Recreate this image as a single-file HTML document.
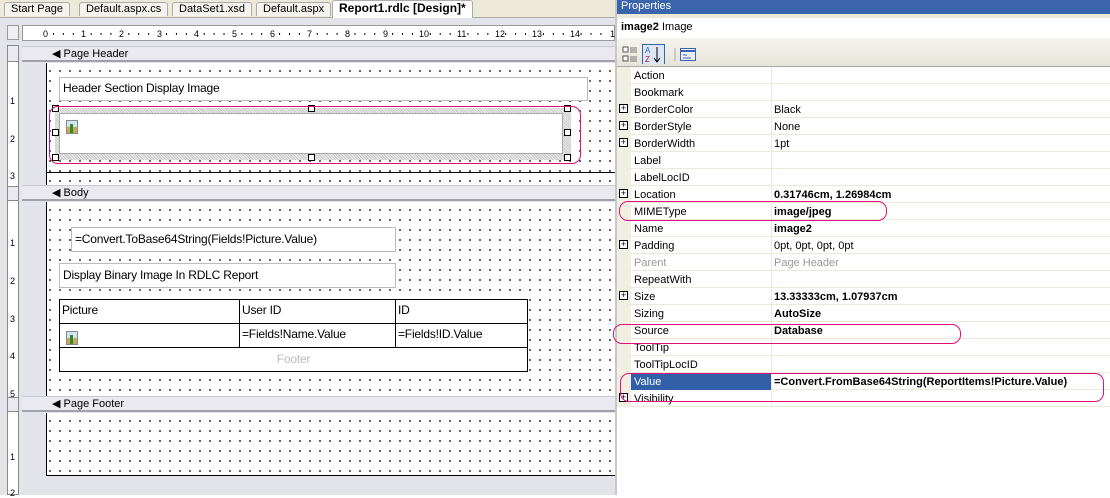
<!DOCTYPE html>
<html><head><style>
*{margin:0;padding:0;box-sizing:border-box}
body{width:1110px;height:495px;overflow:hidden;background:#fff;font-family:"Liberation Sans",sans-serif;font-size:11px;position:relative}
.a{position:absolute}
.tab{position:absolute;top:2px;height:14px;border:1px solid #aaa;border-bottom:none;background:#f4f3ee;font-size:11px;padding:0 6px;line-height:13px;border-radius:3px 3px 0 0}
.dots{background-color:#fff;background-image:radial-gradient(circle,#000 0.7px,transparent 1px);background-size:10px 10px;background-position:-2px 3px}
.band{position:absolute;left:22px;width:593px;height:16px;background:#e9e9ef;border-top:1px solid #c8c8d0;border-bottom:2px solid #a0a0a8}
.band span{position:absolute;left:30px;top:1px;font-size:11px;line-height:13px}
.box{position:absolute;border:1px solid #bbb;background:#fff;font-size:12px;padding-left:3px;letter-spacing:-0.2px}
.row{position:absolute;left:617px;width:493px;height:17px;border-bottom:1px solid #ece9d8;font-size:11px;line-height:18px}
.row .n{position:absolute;left:17px}
.row .v{position:absolute;left:157px}
.row .g{position:absolute;left:0;top:0;width:14px;height:17px;background:#f1efe2}
.row .sep{position:absolute;left:154px;top:0;width:1px;height:17px;background:#ece9d8}
.pl{position:absolute;left:2px;top:3px;width:9px;height:9px;border:1px solid #000;background:#fff;font-size:9px;line-height:7px;text-align:center}
.h{position:absolute;width:7px;height:7px;border:1px solid #000;background:#fff}
.pic{position:absolute;width:12px;height:14px;background:linear-gradient(#cfe3f3 50%,#c9a85a 50%);border:1px solid #8a8a8a}
.pic:after{content:"";position:absolute;left:3px;top:3px;width:3px;height:9px;background:#2d8a2d}
.ring{position:absolute;border:1px solid #e0107a;border-radius:9px}
.rn{position:absolute;top:29px;font-size:9px}
.t{font-size:12px;letter-spacing:-0.2px}
</style></head><body>
<div class="a" style="left:0;top:0;width:617px;height:18px;background:#ece9d8;border-bottom:1px solid #aaa"></div>
<div class="tab" style="left:4px">Start Page</div>
<div class="tab" style="left:79px">Default.aspx.cs</div>
<div class="tab" style="left:172px">DataSet1.xsd</div>
<div class="tab" style="left:256px">Default.aspx</div>
<div class="tab" style="left:332px;top:0;height:18px;background:#fff;font-weight:bold;font-size:12px;line-height:15px">Report1.rdlc [Design]*</div>
<div class="a" style="left:0;top:18px;width:617px;height:477px;background:#e3e3ea"></div>
<div class="a" style="left:7px;top:25px;width:12px;height:15px;background:#f0f0f0;border:1px solid #999"></div>
<div class="a" style="left:22px;top:25px;width:593px;height:16px;background:#fff;border:1px solid #999"></div>
<div class="rn" style="left:43px">0</div><div class="rn" style="left:81px">1</div><div class="rn" style="left:119px">2</div><div class="rn" style="left:157px">3</div><div class="rn" style="left:194px">4</div><div class="rn" style="left:232px">5</div><div class="rn" style="left:270px">6</div><div class="rn" style="left:307px">7</div><div class="rn" style="left:345px">8</div><div class="rn" style="left:383px">9</div><div class="rn" style="left:419px">10</div><div class="rn" style="left:457px">11</div><div class="rn" style="left:495px">12</div><div class="rn" style="left:532px">13</div><div class="rn" style="left:570px">14</div><div class="rn" style="left:610px">1</div>
<div class="a" style="left:45px;top:33px;width:568px;height:2px;background-image:linear-gradient(90deg,transparent 8px,#000 8px,#000 9px,transparent 9px,transparent 18px,#000 18px,#000 19px,transparent 19px,transparent 28px,#000 28px,#000 29px,transparent 29px);background-size:37.7px 2px"></div>
<div class="a" style="left:7px;top:45px;width:12px;height:450px;background:#fff;border:1px solid #888"></div>
<div class="a" style="left:7px;top:45px;width:12px;height:17px;background:#e9e9ef;border:1px solid #888"></div>
<div class="a" style="left:7px;top:186px;width:12px;height:15px;background:#e9e9ef;border:1px solid #888"></div>
<div class="a" style="left:7px;top:397px;width:12px;height:15px;background:#e9e9ef;border:1px solid #888"></div>
<div class="a" style="left:10px;top:96px;font-size:9px">1</div>
<div class="a" style="left:10px;top:134px;font-size:9px">2</div>
<div class="a" style="left:10px;top:171px;font-size:9px">3</div>
<div class="a" style="left:10px;top:238px;font-size:9px">1</div>
<div class="a" style="left:10px;top:276px;font-size:9px">2</div>
<div class="a" style="left:10px;top:314px;font-size:9px">3</div>
<div class="a" style="left:10px;top:351px;font-size:9px">4</div>
<div class="a" style="left:10px;top:389px;font-size:9px">5</div>
<div class="a" style="left:10px;top:452px;font-size:9px">1</div>
<div class="a" style="left:10px;top:488px;font-size:9px">2</div>

<div class="band" style="top:46px"><span>◀ Page Header</span></div>
<div class="a dots" style="left:46px;top:63px;width:569px;height:122px;border-left:1px solid #000"></div>
<div class="a" style="left:46px;top:172px;width:569px;height:1px;background:#000"></div>
<div class="band" style="top:185px"><span>◀ Body</span></div>
<div class="a dots" style="left:46px;top:202px;width:569px;height:194px;border-left:1px solid #000"></div>
<div class="band" style="top:396px"><span>◀ Page Footer</span></div>
<div class="a dots" style="left:46px;top:413px;width:569px;height:63px;border-left:1px solid #000;border-bottom:1px solid #000"></div>

<div class="box" style="left:59px;top:77px;width:529px;height:24px;line-height:21px">Header Section Display Image</div>
<div class="a" style="left:55px;top:108px;width:516px;height:52px;background:repeating-linear-gradient(45deg,#c8c8c8 0 1px,#eee 1px 2px)"></div>
<div class="a" style="left:59px;top:113px;width:504px;height:41px;background:#fff;border:1px solid #aaa"></div>
<div class="pic" style="left:66px;top:120px"></div>
<div class="h" style="left:52px;top:105px"></div><div class="h" style="left:308px;top:105px"></div><div class="h" style="left:564px;top:105px"></div>
<div class="h" style="left:52px;top:129px"></div><div class="h" style="left:564px;top:129px"></div>
<div class="h" style="left:52px;top:154px"></div><div class="h" style="left:308px;top:154px"></div><div class="h" style="left:564px;top:154px"></div>
<div class="ring" style="left:49px;top:106px;width:532px;height:58px"></div>

<div class="box" style="left:71px;top:227px;width:325px;height:25px;line-height:22px">=Convert.ToBase64String(Fields!Picture.Value)</div>
<div class="box" style="left:59px;top:263px;width:337px;height:25px;line-height:22px">Display Binary Image In RDLC Report</div>
<div class="a" style="left:59px;top:299px;width:469px;height:73px;border:1px solid #000;background:#fff"></div>
<div class="a" style="left:59px;top:323px;width:469px;height:1px;background:#000"></div>
<div class="a" style="left:59px;top:347px;width:469px;height:1px;background:#000"></div>
<div class="a" style="left:239px;top:299px;width:1px;height:48px;background:#000"></div>
<div class="a" style="left:395px;top:299px;width:1px;height:48px;background:#000"></div>
<div class="a t" style="left:62px;top:303px">Picture</div>
<div class="a t" style="left:242px;top:303px">User ID</div>
<div class="a t" style="left:398px;top:303px">ID</div>
<div class="pic" style="left:66px;top:331px"></div>
<div class="a t" style="left:242px;top:327px">=Fields!Name.Value</div>
<div class="a t" style="left:398px;top:327px">=Fields!ID.Value</div>
<div class="a t" style="left:59px;top:352px;width:469px;text-align:center;color:#bbb">Footer</div>

<div class="a" style="left:615px;top:0;width:2px;height:495px;background:#c8c8c8"></div>
<div class="a" style="left:617px;top:0;width:493px;height:495px;background:#fff"></div>
<div class="a" style="left:617px;top:0;width:493px;height:14px;background:#3a65ad;color:#fff;font-size:11px;line-height:12px;padding-left:4px">Properties</div>
<div class="a" style="left:617px;top:14px;width:493px;height:4px;background:#ece9d8"></div>
<div class="a" style="left:621px;top:21px;font-size:11px"><b>image2</b> Image</div>
<div class="a" style="left:617px;top:38px;width:493px;height:29px;background:linear-gradient(#f5f4ee,#e6e4da);border-bottom:1px solid #aaa"></div>
<svg class="a" style="left:622px;top:44px" width="80" height="20">
<rect x="1" y="3" width="5" height="5" fill="#fff" stroke="#555"/><rect x="1" y="12" width="5" height="5" fill="#fff" stroke="#555"/>
<path d="M8 4h7M8 6h7M8 8h7M8 13h7M8 15h7M8 17h7" stroke="#777"/>
<rect x="20.5" y="0.5" width="22" height="20" fill="#dce6f4" stroke="#3a65ad"/>
<text x="23" y="9" font-size="8" fill="#36a" font-family="Liberation Sans">A</text><text x="23" y="18" font-size="8" fill="#b22" font-family="Liberation Sans">Z</text>
<path d="M35 3v14M32 14l3 4 3-4" stroke="#000" fill="none"/>
<path d="M53 4v13" stroke="#aaa"/>
<rect x="58.5" y="4.5" width="15" height="12" fill="#eef" stroke="#3a65ad"/><path d="M59 7h14" stroke="#3a65ad" stroke-width="2"/><path d="M61 11h4M61 14h8" stroke="#3a65ad"/>
</svg>

<div class="row" style="top:67px"><div class="g"></div><div class="sep"></div><span class="n">Action</span></div>
<div class="row" style="top:84px"><div class="g"></div><div class="sep"></div><span class="n">Bookmark</span></div>
<div class="row" style="top:101px"><div class="g"></div><div class="pl">+</div><div class="sep"></div><span class="n">BorderColor</span><span class="v">Black</span></div>
<div class="row" style="top:118px"><div class="g"></div><div class="pl">+</div><div class="sep"></div><span class="n">BorderStyle</span><span class="v">None</span></div>
<div class="row" style="top:135px"><div class="g"></div><div class="pl">+</div><div class="sep"></div><span class="n">BorderWidth</span><span class="v">1pt</span></div>
<div class="row" style="top:152px"><div class="g"></div><div class="sep"></div><span class="n">Label</span></div>
<div class="row" style="top:169px"><div class="g"></div><div class="sep"></div><span class="n">LabelLocID</span></div>
<div class="row" style="top:186px"><div class="g"></div><div class="pl">+</div><div class="sep"></div><span class="n">Location</span><b class="v">0.31746cm, 1.26984cm</b></div>
<div class="row" style="top:203px"><div class="g"></div><div class="sep"></div><span class="n">MIMEType</span><b class="v">image/jpeg</b></div>
<div class="row" style="top:220px"><div class="g"></div><div class="sep"></div><span class="n">Name</span><b class="v">image2</b></div>
<div class="row" style="top:237px"><div class="g"></div><div class="pl">+</div><div class="sep"></div><span class="n">Padding</span><span class="v">0pt, 0pt, 0pt, 0pt</span></div>
<div class="row" style="top:254px;color:#999"><div class="g"></div><div class="sep"></div><span class="n">Parent</span><span class="v">Page Header</span></div>
<div class="row" style="top:271px"><div class="g"></div><div class="sep"></div><span class="n">RepeatWith</span></div>
<div class="row" style="top:288px"><div class="g"></div><div class="pl">+</div><div class="sep"></div><span class="n">Size</span><b class="v">13.33333cm, 1.07937cm</b></div>
<div class="row" style="top:305px"><div class="g"></div><div class="sep"></div><span class="n">Sizing</span><b class="v">AutoSize</b></div>
<div class="row" style="top:322px"><div class="g"></div><div class="sep"></div><span class="n">Source</span><b class="v">Database</b></div>
<div class="row" style="top:339px"><div class="g"></div><div class="sep"></div><span class="n">ToolTip</span></div>
<div class="row" style="top:356px"><div class="g"></div><div class="sep"></div><span class="n">ToolTipLocID</span></div>
<div class="row" style="top:373px"><div class="g"></div><div class="a" style="left:14px;top:0;width:140px;height:17px;background:#3160a8"></div><div class="sep"></div><span class="n" style="color:#fff">Value</span><b class="v">=Convert.FromBase64String(ReportItems!Picture.Value)</b></div>
<div class="row" style="top:390px"><div class="g"></div><div class="pl">+</div><div class="sep"></div><span class="n">Visibility</span></div>

<div class="ring" style="left:619px;top:201px;width:268px;height:20px"></div>
<div class="ring" style="left:613px;top:324px;width:348px;height:20px"></div>
<div class="ring" style="left:620px;top:373px;width:484px;height:29px"></div>
</body></html>
